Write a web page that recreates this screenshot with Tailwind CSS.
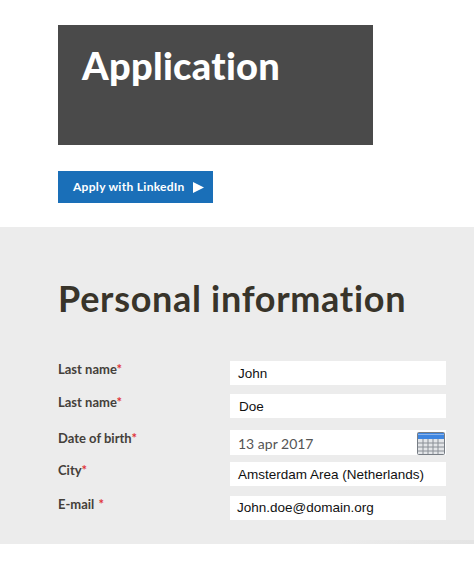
<!DOCTYPE html>
<html lang="en">

<head>
  <meta charset="UTF-8">
  <meta name="viewport" content="width=device-width, initial-scale=1">
  <title>Application</title>
  <script src="https://cdn.jsdelivr.net/npm/@tailwindcss/browser@4"></script>
</head>

<body class="bg-white font-['Lato',sans-serif] overflow-hidden">
  <div class="h-[564px] flex flex-col">
    <div class="pl-[58px] pt-[25px]">
      <div class="w-[315px] h-[120px] bg-[#4a4a4a] pl-[24px] pt-[17px]">
        <h1 class="text-[38px] leading-[46px] font-black text-white tracking-[0.3px]">Application</h1>
      </div>
      <a href="#" class="mt-[26px] w-[155px] h-[32px] bg-[#1a6fb8] flex items-center pl-[15px] text-white text-[12px] font-bold tracking-[0.3px]">
        Apply with LinkedIn
        <svg class="ml-[8px]" width="11" height="11" viewBox="0 0 11 11"><path d="M0 0L11 5.500L0 11Z" fill="#fff"/></svg>
      </a>
    </div>

    <div class="relative mt-[24px] h-[317px] bg-[#ececec] pl-[58px] pr-[28px]">
      <h2 class="pt-[48px] text-[36px] leading-[46px] font-bold text-[#38342a] tracking-[0.7px]">Personal information</h2>

      <form class="mt-[40px] flex flex-col text-[13px] font-bold text-[#44403a]">
        <div class="flex">
          <label class="w-[172px] leading-[16px]">Last name<span class="text-[#e0343a]">*</span></label>
          <div class="w-[216px] h-[24px] bg-white pl-[8px] pt-[2px] flex items-center text-[13.500px] font-normal text-[#111] font-['Liberation_Sans',sans-serif]">John</div>
        </div>
        <div class="flex mt-[9px]">
          <label class="w-[172px] leading-[16px]">Last name<span class="text-[#e0343a]">*</span></label>
          <div class="w-[216px] h-[24px] bg-white pl-[9px] pt-[2px] flex items-center text-[13.500px] font-normal text-[#111] font-['Liberation_Sans',sans-serif]">Doe</div>
        </div>
        <div class="flex mt-[12px]">
          <label class="w-[172px] leading-[16px]">Date of birth<span class="text-[#e0343a]">*</span></label>
          <div class="relative w-[216px] h-[25px] bg-white pl-[8px] pt-[2px] flex items-center text-[14px] font-normal text-[#555]">
            13 apr 2017
            <svg class="absolute right-[1px] top-[2px]" width="28" height="23" viewBox="0 0 28 23">
              <rect x="0.500" y="0.500" width="27" height="22" rx="1" fill="#e3e5e8" stroke="#777d84"/>
              <rect x="1" y="1" width="26" height="6" fill="#3f86e0"/>
              <path d="M1 2.500H27" stroke="#8db5ea"/>
              <path d="M6 7V22M11 7V22M16 7V22M21 7V22M1 11H27M1 15H27M1 19H27" stroke="#8a8f96" fill="none"/>
            </svg>
          </div>
        </div>
        <div class="flex mt-[7px]">
          <label class="w-[172px] leading-[16px]">City<span class="text-[#e0343a]">*</span></label>
          <div class="w-[216px] h-[24px] bg-white pl-[8px] pt-[2px] flex items-center text-[13.500px] font-normal text-[#111] font-['Liberation_Sans',sans-serif]">Amsterdam Area (Netherlands)</div>
        </div>
        <div class="flex mt-[10px]">
          <label class="w-[172px] leading-[16px]">E-mail <span class="ml-[1px] text-[#e0343a]">*</span></label>
          <div class="w-[216px] h-[24px] bg-white pl-[7px] pt-[1px] flex items-center text-[13.500px] font-normal text-[#111] font-['Liberation_Sans',sans-serif]">John.doe@domain.org</div>
        </div>
      </form>
      <div class="absolute bottom-0 right-0 w-[140px] h-[4px] bg-gradient-to-r from-[#ececec] to-[#e4e4e4]"></div>
    </div>
  </div>
</body>

</html>
